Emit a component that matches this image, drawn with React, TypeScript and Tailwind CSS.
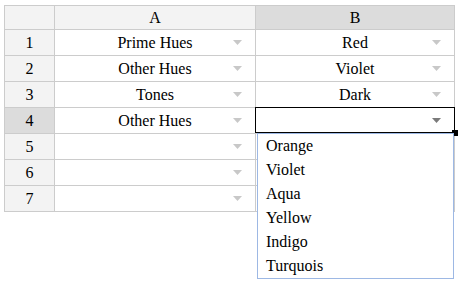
import React from "react";

const Arrow = ({ dark }: { dark?: boolean }) => (
  <svg
    width="9"
    height="5"
    viewBox="0 0 9 5"
    className="absolute right-[13px] top-[10px]"
  >
    <polygon points="0,0 9,0 4.5,5" fill={dark ? "#7a7a7a" : "#c8c8c8"} />
  </svg>
);

const rows: [string, string][] = [
  ["Prime Hues", "Red"],
  ["Other Hues", "Violet"],
  ["Tones", "Dark"],
  ["Other Hues", ""],
  ["", ""],
  ["", ""],
  ["", ""],
];

const options = ["Orange", "Violet", "Aqua", "Yellow", "Indigo", "Turquois"];

export default function App() {
  return (
    <div className="h-[288px] w-[462px] bg-white pl-[4px] pt-[5px] font-['Liberation_Serif','Times_New_Roman',serif] text-[16px] text-black">
      <div className="grid w-fit grid-cols-[50px_201px_199px] border-l border-t border-[#cccccc]">
        <div className="h-[24px] border-b border-r border-[#cccccc] bg-[#f3f3f3]" />
        <div className="flex h-[24px] items-center justify-center border-b border-r border-[#cccccc] bg-[#f3f3f3]">
          A
        </div>
        <div className="flex h-[24px] items-center justify-center border-b border-r border-[#cccccc] bg-[#dcdcdc]">
          B
        </div>
        {rows.map(([a, b], i) => {
          const selected = i === 3;
          return (
            <React.Fragment key={i}>
              <div
                className={`flex h-[26px] items-center justify-center border-b border-r border-[#cccccc] ${
                  selected ? "bg-[#dcdcdc]" : "bg-[#f3f3f3]"
                }`}
              >
                {i + 1}
              </div>
              <div className="relative flex h-[26px] items-center justify-center border-b border-r border-[#cccccc] bg-white">
                {a}
                <Arrow />
              </div>
              <div
                className={`relative flex h-[26px] items-center justify-center border-b border-r border-[#cccccc] bg-white ${
                  selected ? "z-10" : ""
                }`}
              >
                {b}
                <Arrow dark={selected} />
                {selected && (
                  <>
                    <div className="pointer-events-none absolute -left-px -right-px -top-px bottom-0 border border-black" />
                    <div className="absolute -bottom-[3px] -right-[4px] h-[6px] w-[6px] bg-black" />
                    <div className="absolute left-[1px] top-[25px] flex w-[197px] flex-col border border-[#9db8e4] bg-white">
                      {options.map((o) => (
                        <div key={o} className="h-[24px] pl-[8px] leading-[24px]">
                          {o}
                        </div>
                      ))}
                    </div>
                  </>
                )}
              </div>
            </React.Fragment>
          );
        })}
      </div>
    </div>
  );
}
